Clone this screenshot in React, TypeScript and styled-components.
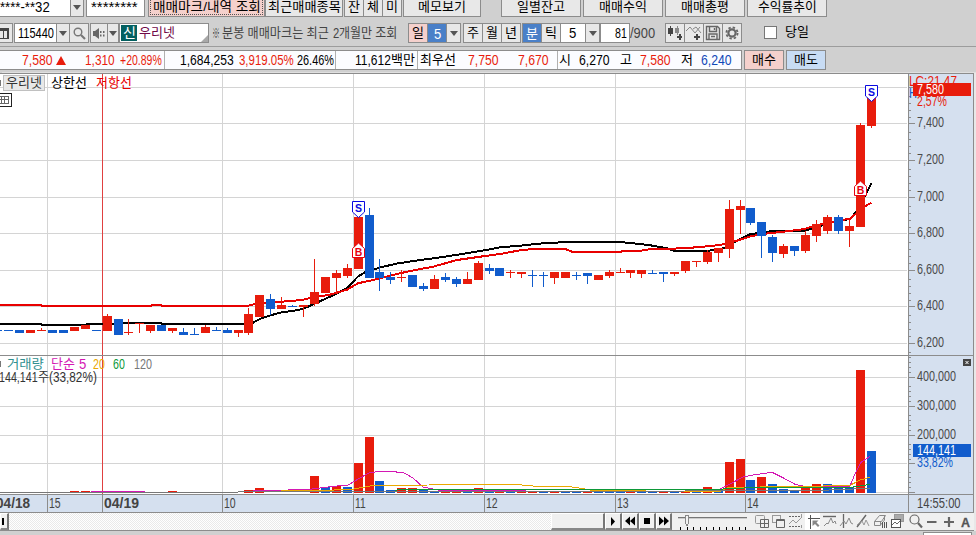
import React, { useLayoutEffect, useRef, useState } from "react";
import styled, { createGlobalStyle } from "styled-components";

const RED = "#e81c0c";
const BLUE = "#115ccc";
const LINE = "#8c8c8c";
const AXIS = "#d5e0ef";
const GREY = "#d0d0d0";

const Global = createGlobalStyle`
  html, body { margin: 0; padding: 0; background: ${GREY}; overflow: hidden; }
  * { box-sizing: border-box; }
  body { font-family: "Liberation Sans", "Noto Sans CJK KR", sans-serif; }
  svg { display: block; flex: none; }
`;

/* ---------- text squeezed to the width of a bitmap-font run ---------- */

const FitBox = styled.span<{ $w: number; $ml?: number; $dy: number }>`
  display: block;
  flex: none;
  width: ${(p) => p.$w}px;
  margin-left: ${(p) => p.$ml || 0}px;
  transform: translateY(${(p) => p.$dy}px);
  height: 16px;
`;
const FitInk = styled.span<{ $c?: string; $size: number; $bold?: boolean }>`
  display: inline-block;
  transform-origin: 0 50%;
  white-space: pre;
  line-height: 16px;
  height: 16px;
  color: ${(p) => p.$c || "#000"};
  font-size: ${(p) => p.$size}px;
  font-weight: ${(p) => (p.$bold ? 700 : 400)};
`;

type FitProps = { t: string; w: number; c?: string; ml?: number; dy?: number; bold?: boolean; size?: number };

function Fit({ t, w, c, ml, dy, bold, size }: FitProps) {
  const ref = useRef<HTMLSpanElement>(null);
  const [scale, setScale] = useState(1);
  const korean = /[가-힣]/.test(t);
  useLayoutEffect(() => {
    if (ref.current) setScale(w / ref.current.offsetWidth);
  }, [t, w]);
  return (
    <FitBox $w={w} $ml={ml} $dy={dy ?? (korean ? -2 : -1)}>
      <FitInk ref={ref} $c={c} $size={size || (korean ? 13 : 15)} $bold={bold} style={{ transform: `scaleX(${scale})` }}>
        {t}
      </FitInk>
    </FitBox>
  );
}

/* ---------- toolbar parts ---------- */

const Screen = styled.div`
  width: 976px;
  height: 535px;
  display: flex;
  flex-direction: column;
  background: ${GREY};
  overflow: hidden;
`;
const TopRow = styled.div`
  display: flex;
  height: 17px;
  align-items: flex-end;
  flex: none;
`;
const ToolRow = styled.div`
  display: flex;
  height: 30px;
  padding-top: 6px;
  align-items: flex-start;
  border-bottom: 1px solid #9c9c9c;
  flex: none;
`;
const QuoteRow = styled.div`
  display: flex;
  height: 26px;
  padding-top: 3px;
  align-items: flex-start;
  flex: none;
`;
const Cell = styled.div<{ $w: number; $ml?: number; $bg?: string; $join?: boolean }>`
  flex: none;
  display: flex;
  align-items: center;
  justify-content: center;
  width: ${(p) => p.$w}px;
  margin-left: ${(p) => (p.$join ? -1 : p.$ml || 0)}px;
  height: 20px;
  background: ${(p) => p.$bg || "#e8e8e8"};
  border: 1px solid ${LINE};
  overflow: hidden;
`;
const DottedCell = styled(Cell)`
  outline: 1px dotted #555;
  outline-offset: -3px;
`;
const Field = styled(Cell)`
  justify-content: flex-start;
  background: #fff;
`;
const Arrow = styled.i`
  width: 0;
  height: 0;
  border: 4px solid transparent;
  border-bottom: 0;
  border-top: 5px solid #555;
`;
const NameBadge = styled.div`
  width: 16px;
  height: 16px;
  margin-left: 1px;
  background: #036060;
  display: flex;
  align-items: center;
  justify-content: center;
`;
const Corner = styled.i`
  align-self: flex-end;
  margin-left: auto;
  border-left: 7px solid transparent;
  border-bottom: 7px solid #a8a8a8;
`;
const Check = styled.div`
  width: 13px;
  height: 13px;
  margin: 3px 0 0 22px;
  background: #fff;
  border: 1px solid #777;
  flex: none;
`;
const QuoteStrip = styled.div`
  display: flex;
  width: 742px;
  height: 20px;
  background: #fbfcff;
  border: 1px solid ${LINE};
  border-left: 0;
  flex: none;
`;
const Quote = styled.div<{ $w: number; $last?: boolean }>`
  display: flex;
  align-items: center;
  width: ${(p) => p.$w}px;
  border-right: ${(p) => (p.$last ? 0 : 1)}px solid #b0b0b0;
  flex: none;
`;
const Up = styled.i<{ $ml: number }>`
  margin-left: ${(p) => p.$ml}px;
  border: 5px solid transparent;
  border-top: 0;
  border-bottom: 9px solid ${RED};
`;

const DropCell = ({ w }: { w: number }) => (
  <Cell $w={w} $join>
    <Arrow />
  </Cell>
);

/* ---------- chart layout ---------- */

const ChartFrame = styled.div`
  flex: none;
  display: flex;
  width: 974px;
  height: 421px;
  border-top: 1px solid ${LINE};
  border-right: 1px solid ${LINE};
  box-shadow: 2px 0 #e8e8e8, 2px -1px #e0e0e0;
  background: #fff;
`;
const Plot = styled.div`
  position: relative;
  width: 908px;
  height: 420px;
  overflow: hidden;
  flex: none;
`;
const AxisCol = styled.div`
  width: 65px;
  height: 420px;
  background: ${AXIS};
  border-left: 1px solid ${LINE};
  flex: none;
`;
const Legend = styled.div<{ $top: number; $left: number }>`
  position: absolute;
  top: ${(p) => p.$top}px;
  left: ${(p) => p.$left}px;
  display: flex;
  align-items: center;
  height: 16px;
`;
const SeriesTag = styled.div`
  width: 42px;
  height: 16px;
  display: flex;
  align-items: center;
  justify-content: center;
  background: #e8e8e8;
  border: 1px solid #c0c0c0;
`;
const Stub = styled.i`
  width: 1px;
  height: 6px;
  margin-right: 2px;
  background: #777;
`;
const TableIcon = styled.div`
  position: absolute;
  left: -3px;
  top: 19px;
`;
const DateBar = styled.div`
  display: flex;
  width: 974px;
  height: 19px;
  background: ${AXIS};
  border: 1px solid ${LINE};
  border-left: 0;
  box-shadow: 2px 0 #e8e8e8;
  flex: none;
`;
const DateCell = styled.div<{ $w: number; $first?: boolean }>`
  display: flex;
  align-items: center;
  width: ${(p) => p.$w}px;
  border-left: ${(p) => (p.$first ? 0 : 1)}px solid ${LINE};
  flex: none;
`;

/* ---------- footer ---------- */

const Footer = styled.div`
  display: flex;
  width: 974px;
  height: 18px;
  background: #f0f0f0;
  border-bottom: 1px solid ${LINE};
  box-shadow: 2px 0 #e8e8e8;
  flex: none;
`;
const Trough = styled.div`
  width: 542px;
  background-image: repeating-conic-gradient(#fff 0 25%, #eaeaea 0 50%);
  background-size: 2px 2px;
  flex: none;
`;
const Raised = styled.div<{ $w: number }>`
  width: ${(p) => p.$w}px;
  height: 17px;
  display: flex;
  align-items: center;
  justify-content: center;
  background: #f0f0f0;
  border: 1px solid #fff;
  border-right: 2px solid #777;
  border-bottom: 2px solid #888;
  flex: none;
`;
const Base = styled.div`
  display: flex;
  justify-content: flex-end;
  padding: 1px 4px 0 0;
  height: 4px;
  flex: none;
`;
const BaseField = styled.div`
  width: 49px;
  height: 6px;
  background: #fff;
  border: 1px solid ${LINE};
`;

/* ---------- data ---------- */

type Candle = [x: number, top: number, bottom: number, up: 0 | 1, hi?: number, lo?: number];
const candles: Candle[] = [
  [-7, 330, 331, 0], [4, 330, 331, 0], [15, 330, 333, 0], [26, 330, 333, 1], [37, 330, 331, 1, 328],
  [48, 330, 333, 0], [59, 330, 333, 0], [70, 327, 331, 1], [81, 325, 329, 1], [92, 330, 331, 0],
  [103, 316, 331, 1, 314], [114, 319, 335, 0], [124, 332, 333, 1, 319, 335], [135, 323, 324, 1, 323, 333],
  [146, 325, 331, 1, 325, 333], [157, 325, 331, 0], [168, 328, 331, 1, 328, 333], [179, 332, 335, 0, 328],
  [190, 334, 335, 0, 328], [201, 327, 333, 1, 325], [212, 330, 331, 0, 327], [223, 330, 333, 0, 328],
  [234, 330, 333, 1, 330, 337], [244, 314, 333, 1, 308, 335], [255, 295, 317, 1], [266, 299, 309, 0, 294, 315],
  [277, 305, 309, 1, 297], [288, 306, 307, 0, 305], [299, 305, 307, 1, 305, 317], [310, 292, 304, 1, 259, 306],
  [321, 277, 293, 1], [332, 273, 278, 1, 270, 294], [343, 268, 276, 1, 264, 278], [354, 217, 269, 1],
  [365, 215, 278, 0, 208], [375, 272, 278, 0, 259, 291], [386, 277, 280, 0, 272, 284], [397, 277, 278, 1, 270, 282],
  [408, 275, 287, 0], [419, 286, 289, 0, 283, 291], [430, 279, 289, 1, 275], [441, 277, 280, 0, 273, 282],
  [452, 279, 284, 0, 277, 287], [463, 279, 284, 1, 272], [474, 263, 280, 1, 261], [485, 268, 271, 0, 264, 274],
  [495, 268, 276, 0], [506, 272, 273, 1, 270, 278], [517, 272, 274, 1, 272, 278], [528, 275, 276, 0, 270, 287],
  [539, 275, 276, 0, 272, 287], [550, 272, 278, 1, 272, 284], [561, 272, 278, 1], [572, 275, 276, 0, 272, 280],
  [583, 273, 276, 0, 273, 284], [594, 275, 280, 1], [605, 272, 276, 1, 270, 278], [616, 272, 273, 1, 268],
  [626, 270, 273, 1, 270, 278], [637, 270, 274, 1, 270, 278], [648, 273, 274, 0, 270], [659, 272, 274, 0, 272, 282],
  [670, 272, 274, 1, 272, 276], [681, 261, 271, 1, 261, 273], [692, 261, 262, 1, 261, 267], [703, 252, 262, 1, 250, 264],
  [714, 248, 253, 1, 248, 262], [725, 209, 249, 1, 200, 258], [736, 206, 210, 1, 200, 234], [746, 208, 223, 0, 208, 225],
  [757, 222, 236, 0, 222, 258], [768, 237, 253, 0, 235, 262], [779, 246, 254, 1, 244, 258], [790, 246, 251, 0, 246, 256],
  [801, 235, 251, 1, 231, 253], [812, 224, 236, 1, 220, 242], [823, 217, 231, 1, 215, 234], [834, 217, 231, 0, 215, 234],
  [845, 226, 231, 1, 220, 247], [856, 125, 227, 1, 123], [867, 97, 126, 1, 97, 128],
];
const volumes: [number, number, 0 | 1][] = [
  [70, 491, 1], [81, 491, 1], [168, 491, 1], [244, 490, 1], [255, 488, 1], [310, 476, 1], [321, 487, 0], [332, 486, 1],
  [343, 487, 0], [354, 463, 1], [365, 437, 1], [375, 481, 0], [386, 490, 0], [397, 488, 1], [408, 488, 1], [419, 489, 0],
  [430, 492, 0], [441, 492, 1], [452, 492, 1], [463, 492, 0], [474, 488, 1], [485, 492, 0], [495, 492, 1], [506, 492, 0],
  [517, 492, 1], [528, 492, 1], [539, 492, 0], [550, 492, 1], [561, 492, 0], [572, 492, 0], [583, 492, 1], [594, 492, 0],
  [605, 492, 0], [616, 492, 0], [626, 492, 1], [637, 492, 0], [648, 492, 0], [659, 492, 1], [670, 492, 0], [681, 491, 1],
  [692, 492, 0], [703, 487, 1], [714, 490, 0], [725, 462, 1], [736, 459, 1], [746, 480, 0], [757, 477, 1], [768, 484, 0],
  [779, 489, 0], [790, 490, 0], [801, 487, 1], [812, 484, 1], [823, 484, 0], [834, 486, 0], [845, 487, 0], [856, 370, 1],
  [867, 451, 0],
];
const blackMA =
  "0,324 41,324 42,325 86,325 87,324 122,324 123,323 161,323 162,324 251,324 254,322 262,318 270,315.5 281,312.5 292,311 303,309 314,304 325,299 336,294 347,288 358,276.5 365,272.3 373,270 379,267.7 397,263.5 417,260.5 443,257 470,252.7 490,249.3 500,247.3 520,245.7 543,243.3 567,242 620,242 640,244 653,245.7 667,248.3 675,251 707,251 725,248 733,242.7 750,234.3 762,232.3 773,231 805,230.6 817,227 833,222 850,219 857,211 865,196 871.5,183";
const redMA =
  "0,305 41,305 42,306 151,306 152,305 161,305 162,306 247,306 255,304 275,302.3 302,300 313,297.3 330,294.7 347,289.7 358,283.3 373,280 390,275.7 410,271 433,266.7 457,260 483,256.3 500,254 520,250.3 533,249 565,249 573,252 620,252 623,251 641,251 643,250 653,249 673,248.7 697,247.3 720,245 737,240.7 750,236.5 763,234 783,231.7 803,229.3 817,225.3 833,221.7 850,218.7 857,212.7 863,207.3 871.5,202.7";
const vol5 =
  "243,491.5 265,490.4 307,489.7 330,486.7 348,485 360,478 370,472.3 385,471.5 403,472.3 413,478 423,487 432,488.7 440,490.4 505,490.4 540,491.4 690,491.4 720,489 730,484 743,477 755,474.7 772,472.3 783,477.7 795,484.3 803,486 850,486 855,474 861,462.3 870,456.3";
const vol20 =
  "255,491.5 350,489.7 370,486 377,485.4 429,485 430,484.5 516,484.5 538,486.4 560,486.5 570,486.8 582,488.4 592,490.4 680,491.4 720,491.4 727,488 767,486.8 810,486.3 850,485.4 860,480 870,477.3";
const vol60 = "308,491.4 395,491 397,490 500,489.5 720,489.5 727,488.4 770,487.4 850,487.4 860,486 870,484.3";
const vol120 = "0,492.5 236,492.5 240,491.5 640,491.5 730,490.5 820,490.4 860,488.7 870,488.6";

const priceGrid = [87, 123, 160, 197, 233, 270, 306, 343];
const volGrid = [377, 406, 435, 463];
const timeGrid = [47, 222, 353, 484, 615, 745];

/* ---------- chart drawings ---------- */

const Marker = ({ x, y, kind }: { x: number; y: number; kind: "S" | "B" }) => {
  const s = kind === "S";
  const col = s ? "#0a0ae0" : "#e80010";
  const d = s
    ? `M${x + 0.5} ${y + 0.5}h12v10.5l-6 5.5l-6 -5.5z`
    : `M${x + 0.5} ${y + 14.5}h12v-9l-6 -5.5l-6 5.5z`;
  return (
    <g>
      <path d={d} fill="#fff" stroke={col} />
      <text x={x + 6.6} y={y + (s ? 11 : 13)} fontSize="10.5" fontWeight="700" textAnchor="middle" fill={col}>
        {kind}
      </text>
    </g>
  );
};

const Series = ({ p, c, w = 1 }: { p: string; c: string; w?: number }) => (
  <polyline points={p} fill="none" stroke={c} strokeWidth={w} />
);

const PlotDrawing = () => (
  <svg width="908" height="420" viewBox="0 74 908 420">
    <g shapeRendering="crispEdges">
      {[...priceGrid, ...volGrid].map((y) => (
        <rect key={y} x="0" y={y} width="907" height="1" fill="#d4d4d4" />
      ))}
      {timeGrid.map((x) => (
        <rect key={x} x={x} y="74" width="1" height="420" fill="#d4d4d4" />
      ))}
      <rect x="102" y="74" width="1" height="420" fill="#e04040" />
      <rect x="0" y="355" width="908" height="1" fill={LINE} />
      <Series p={blackMA} c="#000" w={2} />
      <Series p={redMA} c="#e80000" w={2} />
      {candles.map(([x, t, b, up, hi = t, lo = b]) => (
        <g key={x} fill={up ? RED : BLUE}>
          <rect x={x} y={t} width="9" height={b - t} />
          <rect x={x + 4} y={hi} width="1" height={lo - hi} />
        </g>
      ))}
      <rect x="875" y="492" width="33" height="1" fill="#d4d4d4" />
      {volumes.map(([x, t, up]) => (
        <rect key={x} x={x} y={t} width="9" height={493 - t} fill={up ? RED : BLUE} />
      ))}
      <Series p="91,491.5 145,491.5" c="#d418b4" />
      <Series p={vol5} c="#d418b4" />
      <Series p={vol20} c="#eaa800" />
      <Series p={vol60} c="#0c9838" />
      <Series p={vol120} c="#777" />
    </g>
    <Marker x={352} y={201} kind="S" />
    <Marker x={352} y={243} kind="B" />
    <Marker x={865} y={85} kind="S" />
    <Marker x={854} y={181} kind="B" />
  </svg>
);

const AxisText = ({ x = 917, y, w, t, c = "#4a4a4a" }: { x?: number; y: number; w: number; t: string; c?: string }) => (
  <text x={x} y={y} fontSize="14.5" fill={c} textLength={w} lengthAdjust="spacingAndGlyphs">
    {t}
  </text>
);

const AxisDrawing = () => (
  <svg width="64" height="420" viewBox="909 74 64 420">
    <g shapeRendering="crispEdges" fill="#8c8c8c">
      {priceGrid.map((y) => (
        <g key={y}>
          <rect x="909" y={y} width="6" height="1" />
          {[9, 16, 23, 30].map((d) => (y + d < 355 ? <rect key={d} x="909" y={y + d} width="2" height="1" /> : null))}
        </g>
      ))}
      {[...volGrid, 492].map((y) => (
        <g key={y}>
          <rect x="909" y={y} width="6" height="1" />
          {[9, 14, 19, 24].map((d) => (y + d < 492 ? <rect key={d} x="909" y={y + d} width="2" height="1" /> : null))}
        </g>
      ))}
      {[357, 362, 367, 372].map((y) => (
        <rect key={y} x="909" y={y} width="2" height="1" />
      ))}
      <rect x="909" y="355" width="64" height="1" />
    </g>
    <AxisText x={909} y={86} w={48} t="LC:21,47" c={RED} />
    <AxisText x={909} y={98} w={8} t="H" c={BLUE} />
    <rect x="913" y="83" width="58" height="13" fill={RED} />
    <AxisText y={94} w={27} t="7,580" c="#fff" />
    <AxisText y={106} w={30} t="2,57%" c={RED} />
    {["7,400", "7,200", "7,000", "6,800", "6,600", "6,400", "6,200"].map((t, i) => (
      <AxisText key={t} y={priceGrid[i + 1] + 4} w={27} t={t} />
    ))}
    <AxisText y={381} w={39} t="400,000" />
    <AxisText y={410} w={39} t="300,000" />
    <AxisText y={439} w={39} t="200,000" />
    <AxisText y={467} w={36} t="33,82%" c={BLUE} />
    <rect x="913" y="444" width="58" height="13" fill={BLUE} />
    <AxisText y={455} w={39} t="144,141" c="#fff" />
    <rect x="963" y="359" width="8" height="7" fill="#444" />
    <path d="M965.5 361l3 3m0 -3l-3 3" stroke="#fff" />
  </svg>
);

/* ---------- icons ---------- */

const SearchIcon = ({ s = 13 }: { s?: number }) => (
  <svg width={s} height={s} viewBox="0 0 13 13" fill="none" stroke="#777">
    <circle cx="5" cy="5" r="3.8" strokeWidth="1.4" />
    <path d="M8 8l4 4" strokeWidth="2.2" />
  </svg>
);
const SpeakerIcon = () => (
  <svg width="14" height="13" viewBox="0 0 14 13" fill="#666">
    <path d="M1 4h2l4 -3v11l-4 -3h-2z" />
    <path d="M8 4h1.5v2h-1.5zM8 7.5h1.5v2h-1.5zM11 4h1.5v2h-1.5zM11 7.5h1.5v2h-1.5z" />
  </svg>
);
const WindowIcon = () => (
  <svg width="12" height="13" viewBox="0 0 12 13" fill="none" stroke="#444" shapeRendering="crispEdges">
    <path d="M-2 1.5h10v10h-10M-2 3h10M3.5 2v9" strokeWidth="1.5" />
  </svg>
);
const CandleAddIcon = () => (
  <svg width="16" height="16" viewBox="0 0 16 16" shapeRendering="crispEdges">
    <path d="M1 3h5v6h-5zM3 1h1v10h-1z" fill="#444" />
    <path d="M8 3h4v5h-4zM10 1h1v9h-1z" fill="#888" />
    <path d="M10 11h5v2h-5zM12 9h2v6h-2z" fill="#444" />
  </svg>
);
const LineAddIcon = () => (
  <svg width="16" height="16" viewBox="0 0 16 16" fill="none">
    <path d="M0 6l4 -4l5 6l5 -6M7 4l3 -2l5 6" stroke="#888" />
    <path d="M8 12h6M11 9v6" stroke="#444" strokeWidth="2" />
  </svg>
);
const SaveIcon = () => (
  <svg width="16" height="16" viewBox="0 0 16 16" fill="none" stroke="#666" strokeWidth="1.4">
    <path d="M1.5 1.5h11l2 2v11h-13zM4.5 2v4.5h7v-4.5M4 14v-5h8v5M9.5 3v2M6 11.5h4" />
  </svg>
);
const GearIcon = () => (
  <svg width="14" height="14" viewBox="0 0 14 14" fill="none" stroke="#666">
    <circle cx="7" cy="7" r="3.6" strokeWidth="2.2" />
    <circle cx="7" cy="7" r="5.6" strokeWidth="1.8" strokeDasharray="2.4 2" />
  </svg>
);
const GridIcon = () => (
  <svg width="15" height="14" viewBox="0 0 15 14" shapeRendering="crispEdges">
    <rect x="0.5" y="0.5" width="14" height="13" fill="#fff" stroke="#222" />
    <path d="M3 3.5h9M3 6.5h9M3 10.5h9M4.5 3v8M7.5 3v8M11.5 3v8" stroke="#666" fill="none" />
  </svg>
);
const PlayIcons = {
  play: "M4 2l4 4.500l-4 4.500z",
  rewind: "M6 1.500v9l-5 -4.500zM11 1.500v9l-5 -4.500z",
  stop: "M3 3h6v6h-6z",
  forward: "M1 1.500l5 4.500l-5 4.500zM6 1.500l5 4.500l-5 4.500z",
};
const Play = ({ k }: { k: keyof typeof PlayIcons }) => (
  <svg width="12" height="12" viewBox="0 0 12 12" fill="#000">
    <path d={PlayIcons[k]} />
  </svg>
);
const Slider = () => (
  <svg width="80" height="17" viewBox="672 513 80 17" shapeRendering="crispEdges">
    <rect x="678" y="517" width="69" height="1" fill="#777" />
    <rect x="678" y="518" width="69" height="1" fill="#ccc" />
    <path d="M685.5 515.5h3v8l-1.5 2l-1.5 -2z" fill="#f4f4f4" stroke="#888" />
    {Array.from({ length: 11 }, (_, i) => (
      <rect key={i} x={680 + Math.round(i * 6.5)} y="527" width="1" height="3" fill="#000" />
    ))}
  </svg>
);
const DrawTools = () => (
  <svg width="221" height="17" viewBox="752 513 221 17" fill="none" stroke="#666">
    <rect x="755.5" y="515.5" width="9" height="8" rx="1" stroke="#999" />
    <path d="M760.5 519.5h8v8h-8zM764.5 519.5v8M760.5 523.5h8" fill="#f0f0f0" />
    <rect x="772.5" y="515.5" width="8" height="7" stroke="#999" />
    <path d="M776.5 519.5h8v8h-8zM776.5 520.5h8" fill="#f0f0f0" />
    <path d="M789 516.5h13M789 526.5h13" strokeDasharray="2 1" />
    <path d="M789 524l4 -4l3 3l5 -5M801.5 514v4M801.5 525v3" stroke="#999" />
    <rect x="805" y="513" width="15" height="17" fill="#fff" stroke="none" />
    <path d="M808 518.5h12M810.5 515v14" stroke="#555" />
    <path d="M812.5 520.500h6l-2 2l3 3l-1.500 1.500l-3 -3l-2.500 2z" fill="#888" stroke="none" />
    <path d="M823 516.5h13" strokeWidth="1.4" />
    <path d="M824 526l3 -3l1 1l3 -6l2 5l2 -2l1 3" stroke="#888" />
    <path d="M843.5 514v14" strokeWidth="1.3" />
    <path d="M840 526l4 -5l2 3l3 -6l2 5l2 1" stroke="#888" />
    <path d="M857 527l9 -12" strokeWidth="1.4" />
    <path d="M857 525l5 -4l2 4l2 -5l3 6" stroke="#999" />
    <path d="M874.5 521.5l5 -6h6l-4 6zM874.5 521.5v4h6v-4M880.5 525l4 -5v-4" stroke="#888" />
    <path d="M882.5 522v6M884.5 522v6M886.5 522v6" stroke="#555" />
    <rect x="894.5" y="514.5" width="9" height="7" fill="#aaa" stroke="#999" />
    <rect x="891.5" y="519.5" width="9" height="8" fill="#fff" stroke="#555" />
    <path d="M892 525l3 -3l2 2l3 -3" />
    <circle cx="914.5" cy="519.5" r="4.5" strokeWidth="1.2" />
    <path d="M918 523l4 4.5" strokeWidth="2.2" />
    <path d="M927 522h9.500M944 522h10M949 517v10" strokeWidth="2.2" />
    <text x="961" y="526.5" fontSize="12.5" fontWeight="700" fill="#555" stroke="#555" strokeWidth="0.3">
      A
    </text>
  </svg>
);

/* ---------- page ---------- */

const dates: [number, string, number, boolean?][] = [
  [55, "15", 12],
  [120, "04/19", 35, true],
  [131, "10", 12],
  [131, "11", 11],
  [131, "12", 12],
  [130, "13", 12],
  [163, "14", 12],
];

export default function App() {
  return (
    <Screen>
      <Global />
      <TopRow>
        <Field $w={72} $ml={-1}>
          <Fit t="****-**32" w={50} />
        </Field>
        <DropCell w={14} />
        <Field $w={59} $ml={2}>
          <Fit t="********" w={47} ml={4} />
        </Field>
        <DottedCell $w={117} $ml={3} $bg="#f4d0cc">
          <Fit t="매매마크/내역 조회" w={108} />
        </DottedCell>
        <Cell $w={78}>
          <Fit t="최근매매종목" w={73} />
        </Cell>
        <Cell $w={20} $ml={1}>
          <Fit t="잔" w={12} />
        </Cell>
        <Cell $w={20} $join>
          <Fit t="체" w={12} />
        </Cell>
        <Cell $w={20} $join>
          <Fit t="미" w={12} />
        </Cell>
        <Cell $w={78} $ml={1}>
          <Fit t="메모보기" w={48} />
        </Cell>
        <Cell $w={80} $ml={20}>
          <Fit t="일별잔고" w={48} />
        </Cell>
        <Cell $w={80} $ml={2}>
          <Fit t="매매수익" w={48} />
        </Cell>
        <Cell $w={80} $ml={2}>
          <Fit t="매매총평" w={48} />
        </Cell>
        <Cell $w={80} $ml={2}>
          <Fit t="수익률추이" w={59} />
        </Cell>
      </TopRow>

      <ToolRow>
        <Cell $w={14} $ml={-1}>
          <WindowIcon />
        </Cell>
        <Field $w={43} $ml={1}>
          <Fit t="115440" w={36} ml={3} />
        </Field>
        <DropCell w={14} />
        <Cell $w={20} $join>
          <SearchIcon />
        </Cell>
        <Cell $w={18} $ml={1}>
          <SpeakerIcon />
        </Cell>
        <DropCell w={12} />
        <Field $w={90}>
          <NameBadge>
            <Fit t="신" w={13} c="#fff" />
          </NameBadge>
          <Fit t="우리넷" w={36} c="#700848" ml={2} />
          <Corner />
        </Field>
        <Fit t="※" w={8} c="#333" ml={3} dy={1} size={12} />
        <Fit t="분봉 매매마크는 최근" w={107} c="#444" ml={2} dy={0} />
        <Fit t="2" w={6} c="#444" ml={4} dy={1} />
        <Fit t="개월만 조회" w={58} c="#444" dy={0} />
        <Cell $w={20} $ml={11} $bg="#f4d0cc">
          <Fit t="일" w={12} />
        </Cell>
        <Cell $w={20} $join $bg="#4a80c8">
          <Fit t="5" w={7} c="#fff" dy={0} />
        </Cell>
        <DropCell w={15} />
        <Cell $w={20} $ml={2}>
          <Fit t="주" w={12} />
        </Cell>
        <Cell $w={20} $join>
          <Fit t="월" w={12} />
        </Cell>
        <Cell $w={20} $join>
          <Fit t="년" w={12} />
        </Cell>
        <Cell $w={20} $ml={1} $bg="#4a80c8">
          <Fit t="분" w={12} c="#fff" dy={-1} />
        </Cell>
        <Cell $w={20} $join>
          <Fit t="틱" w={12} />
        </Cell>
        <Field $w={26} $join>
          <Fit t="5" w={7} ml={8} />
        </Field>
        <DropCell w={15} />
        <Field $w={30}>
          <Fit t="81" w={12} ml={14} />
        </Field>
        <Fit t="/900" w={25} c="#444" dy={1} />
        <Cell $w={20} $ml={10}>
          <CandleAddIcon />
        </Cell>
        <Cell $w={20} $join>
          <LineAddIcon />
        </Cell>
        <Cell $w={20} $join>
          <SaveIcon />
        </Cell>
        <Cell $w={20} $join>
          <GearIcon />
        </Cell>
        <Check />
        <Fit t="당일" w={24} ml={8} dy={-1} />
      </ToolRow>

      <QuoteRow>
        <QuoteStrip>
          <Quote $w={165}>
            <Fit t="7,580" w={31} c={RED} ml={22} />
            <Up $ml={3} />
            <Fit t="1,310" w={30} c={RED} ml={19} />
            <Fit t="+20.89%" w={42} c={RED} ml={5} />
          </Quote>
          <Quote $w={171}>
            <Fit t="1,684,253" w={54} ml={15} />
            <Fit t="3,919.05%" w={55} c={RED} ml={5} />
            <Fit t="26.46%" w={37} ml={3} />
          </Quote>
          <Quote $w={82}>
            <Fit t="11,612" w={36} ml={19} />
            <Fit t="백만" w={24} />
          </Quote>
          <Quote $w={140}>
            <Fit t="최우선" w={36} ml={2} />
            <Fit t="7,750" w={31} c={RED} ml={12} />
            <Fit t="7,670" w={31} c={RED} ml={19} />
          </Quote>
          <Quote $w={183} $last>
            <Fit t="시" w={12} ml={1} />
            <Fit t="6,270" w={31} ml={8} />
            <Fit t="고" w={12} ml={10} />
            <Fit t="7,580" w={31} c={RED} ml={8} />
            <Fit t="저" w={12} ml={10} />
            <Fit t="6,240" w={31} c="#1048b8" ml={8} />
          </Quote>
        </QuoteStrip>
        <Cell $w={40} $ml={2} $bg="#f4d0cc">
          <Fit t="매수" w={24} />
        </Cell>
        <Cell $w={40} $ml={2} $bg="#c8dcf4">
          <Fit t="매도" w={24} />
        </Cell>
      </QuoteRow>

      <ChartFrame>
        <Plot>
          <PlotDrawing />
          <Legend $top={1} $left={0}>
            <Stub />
            <SeriesTag>
              <Fit t="우리넷" w={36} c="#333" />
            </SeriesTag>
            <Fit t="상한선" w={36} ml={6} />
            <Fit t="저항선" w={36} c="#e80000" ml={9} />
          </Legend>
          <TableIcon>
            <GridIcon />
          </TableIcon>
          <Legend $top={282} $left={0}>
            <Stub />
            <Fit t="거래량" w={37} c="#309090" ml={4} />
            <Fit t="단순" w={24} c="#d418b4" ml={7} />
            <Fit t="5" w={7} c="#d418b4" ml={4} />
            <Fit t="20" w={12} c="#eaa800" ml={7} />
            <Fit t="60" w={12} c="#0c9838" ml={8} />
            <Fit t="120" w={18} c="#777" ml={9} />
          </Legend>
          <Legend $top={295} $left={-1}>
            <Fit t="144,141" w={39} c="#333" size={14} />
            <Fit t="주" w={11} c="#333" />
            <Fit t="(33,82%)" w={48} c="#333" size={14} />
          </Legend>
        </Plot>
        <AxisCol>
          <AxisDrawing />
        </AxisCol>
      </ChartFrame>

      <DateBar>
        <DateCell $w={47} $first>
          <Fit t="04/18" w={34} ml={-4} c="#444" dy={-2} bold size={14} />
        </DateCell>
        {dates.map(([w, t, tw, bold]) => (
          <DateCell key={t} $w={w}>
            <Fit t={t} w={tw} ml={1} c="#444" dy={-2} bold={bold} size={14} />
          </DateCell>
        ))}
        <DateCell $w={65}>
          <Fit t="14:55:00" w={44} ml={8} c="#444" dy={-2} size={14} />
        </DateCell>
      </DateBar>

      <Footer>
        <Raised $w={9}>
          <svg width="4" height="7" viewBox="0 0 4 7">
            <rect width="2" height="7" />
          </svg>
        </Raised>
        <Trough />
        <Raised $w={54} />
        <Raised $w={17}>
          <Play k="play" />
        </Raised>
        <Raised $w={17}>
          <Play k="rewind" />
        </Raised>
        <Raised $w={17}>
          <Play k="stop" />
        </Raised>
        <Raised $w={16}>
          <Play k="forward" />
        </Raised>
        <Slider />
        <DrawTools />
      </Footer>
      <Base>
        <BaseField />
      </Base>
    </Screen>
  );
}
